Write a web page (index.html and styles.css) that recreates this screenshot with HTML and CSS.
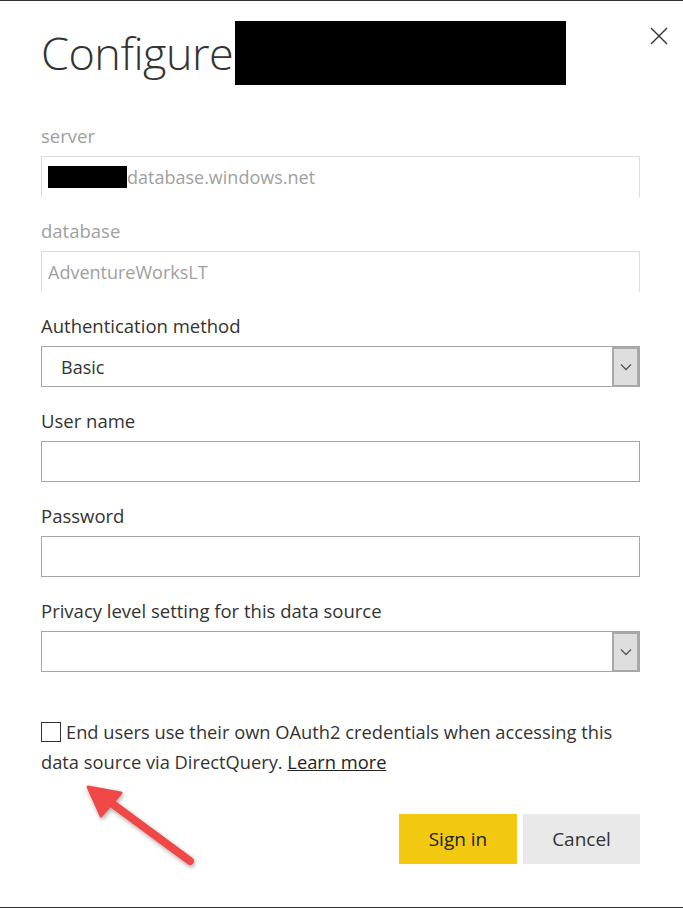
FILE: index.html
```html
<!DOCTYPE html>
<html lang="en">
<head>
  <meta charset="UTF-8" />
  <title>Configure</title>
  <link rel="stylesheet" href="styles.css">
</head>
<body>

  <div class="dialog">
    <div class="header">
      <h1>Configure</h1>
      <span class="redact title-redact"></span>
      <button class="close" aria-label="Close">
        <svg width="18" height="18" viewBox="0 0 18 18"><path d="M1 1 L17 17 M17 1 L1 17" stroke="#333" stroke-width="1.4" fill="none"/></svg>
      </button>
    </div>

    <div class="field">
      <label class="muted">server</label>
      <div class="box readonly"><span class="redact server-redact"></span>database.windows.net</div>
    </div>

    <div class="field">
      <label class="muted">database</label>
      <div class="box readonly">AdventureWorksLT</div>
    </div>

    <div class="field">
      <label>Authentication method</label>
      <div class="box select"><span class="value">Basic</span><span class="drop"><svg width="12" height="8" viewBox="0 0 12 8"><path d="M1 1.5 L6 6.5 L11 1.5" stroke="#555" stroke-width="1.3" fill="none"/></svg></span></div>
    </div>

    <div class="field">
      <label>User name</label>
      <div class="box input"></div>
    </div>

    <div class="field">
      <label>Password</label>
      <div class="box input"></div>
    </div>

    <div class="field">
      <label>Privacy level setting for this data source</label>
      <div class="box select"><span class="value"></span><span class="drop"><svg width="12" height="8" viewBox="0 0 12 8"><path d="M1 1.5 L6 6.5 L11 1.5" stroke="#555" stroke-width="1.3" fill="none"/></svg></span></div>
    </div>

    <p class="oauth">
      <span class="check"></span>End users use their own OAuth2 credentials when accessing this data source via DirectQuery. <a href="#">Learn more</a>
    </p>

    <div class="actions">
      <button class="btn primary">Sign in</button>
      <button class="btn">Cancel</button>
    </div>

    <!-- annotation arrow -->
    <svg class="arrow" width="140" height="100" viewBox="0 0 140 100">
      <defs>
        <filter id="sh" x="-20%" y="-20%" width="140%" height="140%">
          <feDropShadow dx="1" dy="2" stdDeviation="2" flood-color="#000" flood-opacity="0.35"/>
        </filter>
      </defs>
      <g filter="url(#sh)">
        <path d="M110 80 L34 24" stroke="#f04646" stroke-width="8" stroke-linecap="round" fill="none"/>
        <path d="M8 6 L41 12 L21 35 Z" fill="#f04646" stroke="#f04646" stroke-width="3" stroke-linejoin="round"/>
      </g>
    </svg>
  </div>

</body>
</html>
```

FILE: styles.css
```css
* {
  box-sizing: border-box;
  margin: 0;
  padding: 0;
}
body {
  background: #fff;
  font-family: "Open Sans", "Noto Sans", sans-serif;
  color: #333;
}
.dialog {
  position: relative;
  width: 683px;
  height: 908px;
  border-top: 1px solid #333;
  border-bottom: 1px solid #333;
  padding: 0 43px 0 41px;
}
.header {
  display: flex;
  align-items: flex-start;
  height: 123px;
  padding-top: 20px;
}
h1 {
  font-weight: 300;
  font-size: 45px;
  line-height: 64px;
  color: #333;
  letter-spacing: -0.5px;
}
.redact {
  display: inline-block;
  background: #000;
}
.title-redact {
  width: 331px;
  height: 64px;
  margin-left: 2px;
}
.close {
  margin-left: auto;
  margin-top: 6px;
  margin-right: -28px;
  background: none;
  border: none;
  width: 18px;
  height: 18px;
}
.field {
  margin-bottom: 22px;
}
.field label {
  display: block;
  font-size: 18.5px;
  line-height: 24px;
  margin-bottom: 8px;
  color: #333;
}
.field label.muted {
  color: #a0a0a0;
}
.box {
  height: 41px;
  width: 599px;
  display: flex;
  align-items: center;
}
.readonly {
  border: 1px solid #dcdcdc;
  border-bottom: none;
  color: #a0a0a0;
  font-size: 18px;
  padding-left: 6px;
}
.server-redact {
  width: 79px;
  height: 22px;
}
.input {
  border: 1px solid #a6a6a6;
}
.select {
  border: 1px solid #a6a6a6;
  font-size: 18px;
}
.select .value {
  flex: 1;
  padding-left: 19px;
}
.drop {
  width: 27px;
  height: 39px;
  background: #dedede;
  border: 2px solid #a9a9a9;
  border-bottom-width: 1px;
  display: flex;
  align-items: center;
  justify-content: center;
}
.oauth {
  margin-top: 45px;
  font-size: 18.3px;
  line-height: 30px;
  color: #333;
}
.check {
  display: inline-block;
  width: 20px;
  height: 20px;
  border: 1px solid #333;
  vertical-align: -3px;
  margin-right: 5px;
}
.oauth a {
  color: #222;
  text-decoration: underline;
}
.actions {
  display: flex;
  justify-content: flex-end;
  gap: 6px;
  margin-top: 37px;
}
.btn {
  width: 117px;
  height: 50px;
  border: none;
  background: #e9e9e9;
  color: #333;
  font-family: "Open Sans", "Noto Sans", sans-serif;
  font-size: 19px;
}
.btn.primary {
  background: #f2c811;
  color: #222;
  width: 118px;
}
.arrow {
  position: absolute;
  left: 80px;
  top: 780px;
}
```
